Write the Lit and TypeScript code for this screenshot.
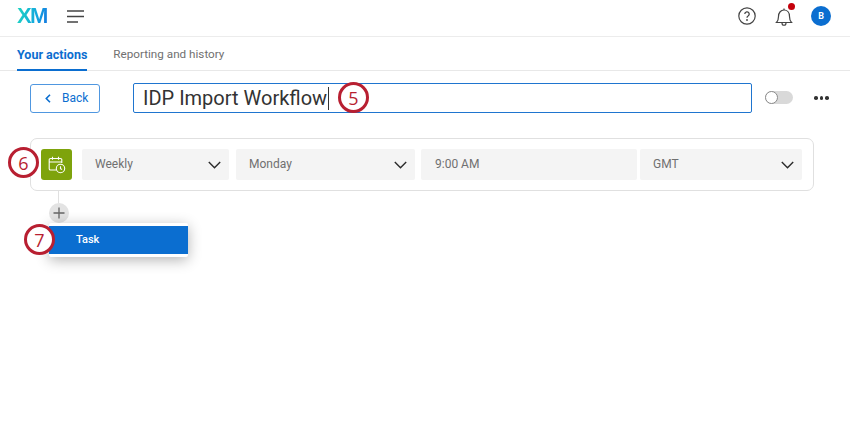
import { LitElement, html, css } from "lit";
import { customElement } from "lit/decorators.js";

const chevron = html`<svg class="chev" width="13" height="8" viewBox="0 0 13 8"><path d="M.8 1 6.500 6.800 12.200 1" fill="none" stroke="#2a2a2a" stroke-width="1.400"/></svg>`;

@customElement("app-root")
export class AppRoot extends LitElement {
  static styles = css`
    :host { display: block; position: relative; width: 850px; height: 425px; background: #fff; overflow: hidden; font-family: Roboto, "Open Sans", sans-serif; color: #333; }
    .top { border-bottom: 1px solid #ececec; display: flex; align-items: flex-start; padding: 6px 19px 0 17px; box-sizing: border-box; height: 37px; }
    .logo { font-family: "Liberation Sans", sans-serif; font-size: 22px; letter-spacing: -1.6px; font-weight: 700; background: linear-gradient(100deg, #1fd6c0 0%, #12a5e0 42%, #1668e0 70%, #6a3fd6 100%); -webkit-background-clip: text; background-clip: text; color: transparent; width: 50px; line-height: 20px; }
    .burger { display: block; margin-top: 4px; }
    .spacer { flex: 1; }
    .icons { display: flex; align-items: flex-start; }
    .help { margin-right: 19px; margin-top: 1px; display: block; }
    .bell { position: relative; width: 18px; height: 24px; margin-right: 18px; }
    .bell svg { display: block; margin-top: 1px; }
    .dot { position: absolute; top: -3px; right: -2px; width: 7px; height: 7px; border-radius: 50%; background: #c4000b; }
    .avatar { width: 20px; height: 20px; border-radius: 50%; background: #0b6ed0; color: #fff; font-size: 9px; font-weight: 700; display: flex; align-items: center; justify-content: center; }
    .tabs { height: 33px; border-bottom: 1px solid #e8e8e8; display: flex; padding-left: 17px; gap: 26px; font-size: 11.700px; box-sizing: content-box; }
    .tab { line-height: 35px; height: 33px; box-sizing: border-box; color: #707070; }
    .tab.on { color: #0b6ed0; font-size: 12.500px; font-weight: 700; border-bottom: 2px solid #0b6ed0; height: 34px; }
    .head { display: flex; align-items: center; padding: 12px 20px 0 30px; }
    .back { flex: none; width: 70px; height: 29px; box-sizing: border-box; border: 1px solid #4f97e0; border-radius: 3px; color: #0b6ed0; font-size: 12px; display: flex; align-items: center; padding-left: 14px; gap: 11px; }
    .title { flex: none; margin-left: 33px; width: 619px; height: 30px; box-sizing: border-box; border: 1px solid #1f75cf; border-radius: 2px; font-size: 20px; line-height: 28px; padding-left: 9px; color: #333; display: flex; align-items: center; white-space: nowrap; }
    .caret { display: inline-block; width: 1px; height: 23px; background: #333; margin-left: 1px; }
    .toggle { flex: none; margin-left: 13px; width: 28px; height: 13px; border-radius: 7px; background: #d9d9d9; position: relative; margin-top: -1px; }
    .knob { position: absolute; left: 0; top: 0; width: 13px; height: 13px; box-sizing: border-box; border-radius: 50%; background: #fff; border: 1px solid #8a8a8a; }
    .dots { flex: none; margin-left: 21px; display: flex; gap: 2px; }
    .dots i { width: 3.600px; height: 3.600px; border-radius: 50%; background: #333; display: block; }
    .card { margin: 25px 36px 0 30px; height: 53px; box-sizing: border-box; border: 1px solid #e0e0e0; border-radius: 7px; display: flex; align-items: center; padding-left: 10px; }
    .cal { width: 31px; height: 31px; border-radius: 3px; background: #7ea30c; display: flex; align-items: center; justify-content: center; }
    .sel { height: 31px; background: #f4f4f4; border-radius: 2px; display: flex; align-items: center; justify-content: space-between; box-sizing: border-box; font-size: 12px; color: #707070; padding: 0 8px 0 13px; }
    .sel span { margin-bottom: 2px; }
    .s1 { width: 147px; margin-left: 10px; }
    .s2 { width: 179px; margin-left: 7px; }
    .s3 { width: 216px; margin-left: 6px; padding-left: 14px; }
    .s4 { width: 162px; margin-left: 3px; }
    .stem { width: 1px; height: 12px; background: #e0e0e0; margin-left: 58px; }
    .plus { width: 20px; height: 20px; margin: 0 0 0 49px; border-radius: 50%; background: #e3e3e3; display: flex; align-items: center; justify-content: center; }
    .menu { position: absolute; left: 49px; top: 223px; width: 139px; height: 34px; box-sizing: border-box; padding: 3px 0; background: #fff; border-radius: 2px; box-shadow: 0 3px 14px rgba(0,0,0,.3); }
    .item { height: 28px; background: #0b6ed0; color: #fff; font-size: 11px; font-weight: 500; line-height: 28px; padding-left: 27px; }
    .call { position: absolute; width: 25px; height: 25px; border: 3px solid #b81f31; border-radius: 50%; background: #fff; color: #b81f31; font-size: 18px; font-family: "Open Sans", sans-serif; display: flex; align-items: center; justify-content: center; box-sizing: content-box; }
    .c5 { left: 338px; top: 82px; }
    .c6 { left: 8px; top: 147px; }
    .c7 { left: 24px; top: 224px; }
  `;

  render() {
    return html`
      <div class="top">
        <div class="logo">XM</div>
        <svg class="burger" width="17" height="13" viewBox="0 0 17 13"><path d="M0 1h17M0 6.500h17M0 12h11" stroke="#444" stroke-width="1.300" fill="none"/></svg>
        <div class="spacer"></div>
        <div class="icons">
          <svg class="help" width="18" height="18" viewBox="0 0 18 18"><circle cx="9" cy="9" r="8.200" fill="none" stroke="#444" stroke-width="1.200"/><path d="M6.800 7.100a2.200 2.200 0 1 1 3.300 1.900c-.8.5-1.100.9-1.100 1.800" fill="none" stroke="#444" stroke-width="1.300"/><circle cx="9" cy="13" r=".9" fill="#444"/></svg>
          <div class="bell">
            <svg width="18" height="20" viewBox="0 0 18 20"><path d="M1.500 15.500c1.500-1.600 2-2.800 2-6C3.500 5.500 6 3 9 3s5.500 2.500 5.500 6.500c0 3.200.5 4.400 2 6z" fill="none" stroke="#444" stroke-width="1.200"/><path d="M7 16c0 3 4 3 4 0M9 3V1.500" fill="none" stroke="#444" stroke-width="1.200"/></svg>
            <span class="dot"></span>
          </div>
          <div class="avatar">B</div>
        </div>
      </div>
      <div class="tabs">
        <div class="tab on">Your actions</div>
        <div class="tab">Reporting and history</div>
      </div>
      <div class="head">
        <div class="back">
          <svg width="6" height="9" viewBox="0 0 6 9"><path d="M5 .8 1.300 4.500 5 8.200" fill="none" stroke="#0b6ed0" stroke-width="1.600"/></svg>
          <span>Back</span>
        </div>
        <div class="title">IDP Import Workflow<span class="caret"></span></div>
        <div class="toggle"><div class="knob"></div></div>
        <div class="dots"><i></i><i></i><i></i></div>
      </div>
      <div class="card">
        <div class="cal">
          <svg width="18" height="18" viewBox="0 0 18 18" fill="none" stroke="#fff" stroke-width="1.100"><path d="M8 14H2.500A1.300 1.300 0 0 1 1.200 12.700V3.800A1.300 1.300 0 0 1 2.500 2.500h10A1.300 1.300 0 0 1 13.800 3.800V7M1.200 6h12.600M4.500 .8v3M10.500 .8v3"/><circle cx="12.500" cy="12.500" r="4.200"/><path d="M12.500 10.300v2.400l1.600.8"/></svg>
        </div>
        <div class="sel s1"><span>Weekly</span>${chevron}</div>
        <div class="sel s2"><span>Monday</span>${chevron}</div>
        <div class="sel s3"><span>9:00 AM</span></div>
        <div class="sel s4"><span>GMT</span>${chevron}</div>
      </div>
      <div class="stem"></div>
      <div class="plus"><svg width="12" height="12" viewBox="0 0 12 12"><path d="M6 .5v11M.5 6h11" stroke="#666" stroke-width="1.300"/></svg></div>
      <div class="menu"><div class="item">Task</div></div>
      <div class="call c5">5</div>
      <div class="call c6">6</div>
      <div class="call c7">7</div>
    `;
  }
}
